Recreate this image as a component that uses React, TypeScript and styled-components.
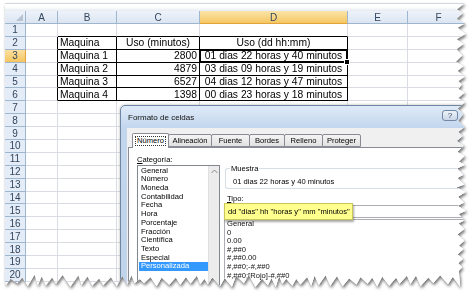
import React from "react";
import styled, { createGlobalStyle } from "styled-components";

const GlobalStyle = createGlobalStyle`
  html, body {
    margin: 0;
    padding: 0;
    background: #ffffff;
  }
  body {
    width: 474px;
    height: 294px;
    overflow: hidden;
    font-family: "Liberation Sans", Arial, sans-serif;
  }
`;

const COLS = [21, 32, 59, 83, 148, 60, 62];
const LETTERS = ["A", "B", "C", "D", "E", "F"];
const ROW_H = 12.9;
const ROWS = 20;
const GRID = "#d9dde3";
const HEAD_LINE = "#9eb6ce";

type Align = "left" | "center" | "right";
interface CellData {
  text: string;
  align?: Align;
}

// row number -> cells in B, C, D
const tableData: Record<number, CellData[]> = {
  2: [
    { text: "Maquina" },
    { text: "Uso (minutos)", align: "center" },
    { text: "Uso (dd hh:mm)", align: "center" },
  ],
  3: [
    { text: "Maquina 1" },
    { text: "2800", align: "right" },
    { text: "01 dias 22 horas y 40 minutos", align: "center" },
  ],
  4: [
    { text: "Maquina 2" },
    { text: "4879", align: "right" },
    { text: "03 dias 09 horas y 19 minutos", align: "center" },
  ],
  5: [
    { text: "Maquina 3" },
    { text: "6527", align: "right" },
    { text: "04 dias 12 horas y 47 minutos", align: "center" },
  ],
  6: [
    { text: "Maquina 4" },
    { text: "1398", align: "right" },
    { text: "00 dias 23 horas y 18 minutos", align: "center" },
  ],
};

const categories = [
  "General",
  "Número",
  "Moneda",
  "Contabilidad",
  "Fecha",
  "Hora",
  "Porcentaje",
  "Fracción",
  "Científica",
  "Texto",
  "Especial",
  "Personalizada",
];

const formats = [
  "General",
  "0",
  "0.00",
  "#,##0",
  "#,##0.00",
  "#,##0;-#,##0",
  "#,##0;[Rojo]-#,##0",
];

const tabs = [
  { label: "Número", width: 37 },
  { label: "Alineación", width: 44 },
  { label: "Fuente", width: 39 },
  { label: "Bordes", width: 36 },
  { label: "Relleno", width: 39 },
  { label: "Proteger", width: 39 },
];

// torn paper outline (right + bottom edges)
function tornOutline(w: number, h: number) {
  let seed = 11;
  const rnd = () => {
    seed = (seed * 9301 + 49297) % 233280;
    return seed / 233280;
  };
  const pts: string[] = ["0px 0px"];
  const right = w - 12;
  let y = 0;
  let out = true;
  while (y < h - 12) {
    const x = right + (out ? 6 + rnd() * 4 : rnd() * 3);
    pts.push(`${x.toFixed(1)}px ${y.toFixed(1)}px`);
    y += 3 + rnd() * 4;
    out = !out;
  }
  let x = right + 4;
  let down = true;
  while (x > 0) {
    const yy = h - 13 + (down ? 8 + rnd() * 4 : rnd() * 4);
    pts.push(`${x.toFixed(1)}px ${yy.toFixed(1)}px`);
    x -= 3 + rnd() * 5;
    down = !down;
  }
  pts.push(`0px ${h - 6}px`);
  return `polygon(${pts.join(", ")})`;
}

const inTable = (r: number, c: number) => r >= 2 && r <= 6 && c >= 1 && c <= 3;

export default function App() {
  const clip = tornOutline(463, 285);
  const rows = Array.from({ length: ROWS }, (_, i) => i + 1);

  return (
    <>
      <GlobalStyle />
      <Stage>
        <Shadow>
          <Paper style={{ clipPath: clip }}>
            <FormulaStrip />
            <GridRow $height={13}>
              <Corner>
                <CornerMark />
              </Corner>
              {LETTERS.map((l) => (
                <ColHead key={l} $selected={l === "D"}>
                  {l}
                </ColHead>
              ))}
            </GridRow>
            {rows.map((r) => (
              <GridRow key={r} $height={ROW_H}>
                <RowHead $selected={r === 3}>{r}</RowHead>
                {LETTERS.map((_, c) => {
                  const data = tableData[r];
                  const cell = data && c >= 1 && c <= 3 ? data[c - 1] : undefined;
                  const right = inTable(r, c) || inTable(r, c + 1) ? "#000" : GRID;
                  const bottom = inTable(r, c) || inTable(r + 1, c) ? "#000" : GRID;
                  return (
                    <Cell
                      key={c}
                      $right={right}
                      $bottom={bottom}
                      $align={cell?.align ?? "left"}
                      $active={r === 3 && c === 3}
                    >
                      {cell?.text}
                    </Cell>
                  );
                })}
              </GridRow>
            ))}

            <Dialog>
              <TitleBar>
                <span>Formato de celdas</span>
                <HelpButton>?</HelpButton>
              </TitleBar>
              <Body>
                <TabStrip>
                  {tabs.map((t, i) => (
                    <Tab key={t.label} $width={t.width} $selected={i === 0}>
                      {i === 0 ? <FocusText>{t.label}</FocusText> : t.label}
                    </Tab>
                  ))}
                </TabStrip>
                <Panel>
                  <CategoryColumn>
                    <FieldLabel>
                      <u>C</u>ategoría:
                    </FieldLabel>
                    <ListBox>
                      <ListItems>
                        {categories.map((c) => (
                          <ListItem key={c} $selected={c === "Personalizada"}>
                            {c}
                          </ListItem>
                        ))}
                      </ListItems>
                      <ScrollBar>
                        <svg width="7" height="5" viewBox="0 0 7 5">
                          <path d="M0.5 4 L3.5 1 L6.5 4" fill="none" stroke="#8a8a8a" strokeWidth="1" />
                        </svg>
                      </ScrollBar>
                    </ListBox>
                  </CategoryColumn>
                  <FormatColumn>
                    <SampleGroup>
                      <GroupCaption>Muestra</GroupCaption>
                      <SampleText>01 dias 22 horas y 40 minutos</SampleText>
                    </SampleGroup>
                    <TypeLabel>
                      <u>T</u>ipo:
                    </TypeLabel>
                    <TypeInput>
                      <Callout>dd "dias" hh "horas y" mm "minutos"</Callout>
                    </TypeInput>
                    <FormatList>
                      {formats.map((f) => (
                        <FormatItem key={f}>{f}</FormatItem>
                      ))}
                    </FormatList>
                  </FormatColumn>
                </Panel>
              </Body>
            </Dialog>
          </Paper>
        </Shadow>
      </Stage>
    </>
  );
}

/* ---------------- styled-components ---------------- */

const Stage = styled.div`
  padding: 3px 0 0 5px;
`;

const Shadow = styled.div`
  filter: drop-shadow(1px 2px 1.5px rgba(0, 0, 0, 0.55));
  width: 463px;
`;

const Paper = styled.div`
  position: relative;
  width: 463px;
  height: 285px;
  background: #ffffff;
  overflow: hidden;
`;

const FormulaStrip = styled.div`
  height: 8px;
  box-sizing: border-box;
  border-top: 1px solid #d3d8de;
  background: linear-gradient(#ffffff 40%, #e6ebf1);
`;

const GridRow = styled.div<{ $height: number }>`
  display: grid;
  grid-template-columns: ${COLS.map((c) => `${c}px`).join(" ")};
  height: ${(p) => p.$height}px;
`;

const headText = `
  font-family: "Liberation Sans", Arial, sans-serif;
  font-size: 10px;
  color: #33465e;
  display: flex;
  align-items: center;
  justify-content: center;
  box-sizing: border-box;
`;

const Corner = styled.div`
  ${headText}
  background: linear-gradient(#eef3fa, #dbe5f1);
  border-right: 1px solid ${HEAD_LINE};
  border-bottom: 1px solid ${HEAD_LINE};
  justify-content: flex-end;
  align-items: flex-end;
  padding: 0 2px 2px 0;
`;

const CornerMark = styled.div`
  width: 0;
  height: 0;
  border-left: 7px solid transparent;
  border-bottom: 7px solid #b7c3d3;
`;

const ColHead = styled.div<{ $selected?: boolean }>`
  ${headText}
  background: ${(p) =>
    p.$selected
      ? "linear-gradient(#fbe4a8, #f5c763)"
      : "linear-gradient(#eef3fa, #dbe5f1)"};
  border-right: 1px solid ${HEAD_LINE};
  border-bottom: 1px solid ${(p) => (p.$selected ? "#e3a23a" : HEAD_LINE)};
`;

const RowHead = styled.div<{ $selected?: boolean }>`
  ${headText}
  background: ${(p) =>
    p.$selected ? "linear-gradient(#fbe0a0, #f5c55e)" : "#e4ecf7"};
  border-right: 1px solid ${(p) => (p.$selected ? "#e3a23a" : HEAD_LINE)};
  border-bottom: 1px solid ${HEAD_LINE};
`;

const Cell = styled.div<{
  $right: string;
  $bottom: string;
  $align: Align;
  $active?: boolean;
}>`
  position: relative;
  box-sizing: border-box;
  border-right: 1px solid ${(p) => p.$right};
  border-bottom: 1px solid ${(p) => p.$bottom};
  font-family: "Liberation Sans", Arial, sans-serif;
  font-size: 10.3px;
  color: #000;
  white-space: nowrap;
  overflow: visible;
  display: flex;
  align-items: center;
  justify-content: ${(p) =>
    p.$align === "center" ? "center" : p.$align === "right" ? "flex-end" : "flex-start"};
  padding: 0 2px;
  box-shadow: ${(p) => (p.$active ? "inset 0 0 0 1px #000, 0 -1px 0 #000" : "none")};

  &::after {
    content: "";
    display: ${(p) => (p.$active ? "block" : "none")};
    position: absolute;
    right: -3px;
    bottom: -3px;
    width: 4px;
    height: 4px;
    background: #000;
    border: 1px solid #fff;
    z-index: 1;
  }
`;

const Dialog = styled.div`
  position: absolute;
  left: 115px;
  top: 102px;
  width: 372px;
  height: 200px;
  box-sizing: border-box;
  border: 1px solid #6f86a5;
  border-radius: 5px 5px 0 0;
  background: linear-gradient(#dfeaf7, #c2d6ee 22px, #bfd3eb);
  box-shadow: 0 0 3px rgba(0, 0, 0, 0.3);
  display: flex;
  flex-direction: column;
  font-family: "Liberation Sans", Arial, sans-serif;
  font-size: 7.6px;
  color: #000;
`;

const TitleBar = styled.div`
  height: 22px;
  display: flex;
  align-items: center;
  padding-left: 7px;
  font-size: 8px;
  color: #111;
`;

const HelpButton = styled.div`
  margin-left: auto;
  margin-right: 33px;
  margin-bottom: 4px;
  width: 16px;
  height: 11px;
  box-sizing: border-box;
  border: 1px solid #7187a5;
  border-radius: 3px;
  background: linear-gradient(#eef3f9, #c9d6e6);
  font-size: 8px;
  line-height: 9px;
  text-align: center;
  color: #3a4a60;
`;

const Body = styled.div`
  flex: 1;
  margin-left: 6px;
  padding-left: 1px;
  background: #f0f0f0;
  display: flex;
  flex-direction: column;
`;

const TabStrip = styled.div`
  height: 19px;
  display: flex;
  align-items: flex-end;
  padding-left: 5px;
`;

const Tab = styled.div<{ $width: number; $selected?: boolean }>`
  position: relative;
  width: ${(p) => p.$width}px;
  height: ${(p) => (p.$selected ? 15 : 13)}px;
  box-sizing: border-box;
  margin-left: -1px;
  margin-bottom: ${(p) => (p.$selected ? -1 : 0)}px;
  border: 1px solid #898c95;
  border-bottom: ${(p) => (p.$selected ? "none" : "1px solid #898c95")};
  border-radius: 2px 2px 0 0;
  background: ${(p) => (p.$selected ? "#ffffff" : "linear-gradient(#f4f4f4, #e2e2e2)")};
  z-index: ${(p) => (p.$selected ? 1 : 0)};
  display: flex;
  align-items: center;
  justify-content: center;
  white-space: nowrap;
`;

const FocusText = styled.span`
  outline: 1px dotted #333;
  padding: 0 1px;
  line-height: 8px;
`;

const Panel = styled.div`
  flex: 1;
  background: #ffffff;
  border: 1px solid #898c95;
  border-right: none;
  border-bottom: none;
  display: flex;
  padding: 7px 0 0 8px;
`;

const CategoryColumn = styled.div`
  width: 83px;
  display: flex;
  flex-direction: column;
`;

const FieldLabel = styled.div`
  height: 9px;
  line-height: 9px;
`;

const ListBox = styled.div`
  margin-top: 1px;
  height: 130px;
  box-sizing: border-box;
  border: 1px solid #828790;
  display: flex;
`;

const ListItems = styled.div`
  flex: 1;
  padding-top: 0.5px;
`;

const ListItem = styled.div<{ $selected?: boolean }>`
  height: 8.73px;
  line-height: 8.73px;
  margin-left: 1px;
  padding-left: 2px;
  white-space: nowrap;
  background: ${(p) => (p.$selected ? "#3399ff" : "transparent")};
  color: ${(p) => (p.$selected ? "#ffffff" : "#000")};
`;

const ScrollBar = styled.div`
  width: 11px;
  background: #ececec;
  border-left: 1px solid #e0e0e0;
  display: flex;
  justify-content: center;
  padding-top: 3px;
  box-sizing: border-box;
`;

const FormatColumn = styled.div`
  flex: 1;
  margin-left: 4px;
  display: flex;
  flex-direction: column;
`;

const SampleGroup = styled.div`
  position: relative;
  margin: 13px 0 0 1px;
  height: 21px;
  box-sizing: border-box;
  border: 1px solid #d5dfe5;
  border-right: none;
  border-radius: 3px 0 0 3px;
  padding: 8px 0 0 7px;
`;

const GroupCaption = styled.span`
  position: absolute;
  left: 4px;
  top: -5px;
  padding: 0 1px;
  background: #ffffff;
  line-height: 9px;
`;

const SampleText = styled.div`
  line-height: 9px;
  white-space: nowrap;
`;

const TypeLabel = styled.div`
  margin-top: 4.5px;
  height: 9px;
  line-height: 9px;
  padding-left: 3px;
`;

const TypeInput = styled.div`
  position: relative;
  margin-top: 2.5px;
  height: 13px;
  box-sizing: border-box;
  border: 1px solid #abadb3;
  border-right: none;
`;

const Callout = styled.div`
  position: absolute;
  left: -1px;
  top: -3px;
  width: 129px;
  height: 17px;
  box-sizing: border-box;
  border: 1px solid #c9c75a;
  background: #ffff8e;
  box-shadow: 1px 2px 2px rgba(0, 0, 0, 0.35);
  padding-left: 3px;
  line-height: 15px;
  white-space: nowrap;
  color: #000;
`;

const FormatList = styled.div`
  margin-top: 1px;
  flex: 1;
  border: 1px solid #abadb3;
  border-right: none;
  padding-left: 2px;
`;

const FormatItem = styled.div`
  height: 8.6px;
  line-height: 8.6px;
  white-space: nowrap;
  color: #111;
`;
